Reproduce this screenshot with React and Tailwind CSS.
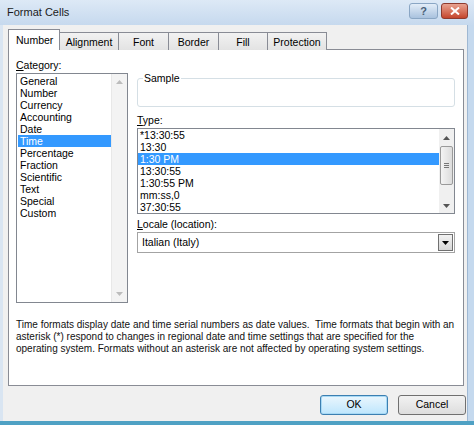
import React from 'react';

const categories = ['General', 'Number', 'Currency', 'Accounting', 'Date', 'Time', 'Percentage', 'Fraction', 'Scientific', 'Text', 'Special', 'Custom'];
const types = ['*13:30:55', '13:30', '1:30 PM', '13:30:55', '1:30:55 PM', 'mm:ss,0', '37:30:55'];
const tabs = [
    { label: 'Alignment', w: 'w-[59px]' },
    { label: 'Font', w: 'w-[50px]' },
    { label: 'Border', w: 'w-[50px]' },
    { label: 'Fill', w: 'w-[49px]' },
    { label: 'Protection', w: 'w-[59px]' },
];

function Arrow({ dir = 'down', color = '#888' }) {
    return (
        <svg width="7" height="4" viewBox="0 0 7 4">
            {dir === 'down'
                ? <path d="M0 0H7L3.5 4Z" fill={color} />
                : <path d="M0 4H7L3.5 0Z" fill={color} />}
        </svg>
    );
}

function ListRow({ text, selected }) {
    return (
        <div className={`h-[12px] leading-[12px] pl-[2px] ${selected ? 'bg-[#3399ff] text-white' : 'text-black'}`}>
            {text}
        </div>
    );
}

export default function App() {
    return (
        <div className="w-[474px] h-[425px] flex flex-col bg-[#f0f0f0] text-[10.5px] text-black overflow-hidden" style={{ fontFamily: '"Liberation Sans", Arial, sans-serif' }}>
            {/* Title bar */}
            <div className="h-[25px] flex items-center bg-gradient-to-b from-[#dde9f6] to-[#c6d9ee] pl-[7px] pr-[6px]">
                <span className="text-[11px] text-[#1b1b1b] flex-1">Format Cells</span>
                <div className="flex gap-[3px] -mt-[3px]">
                    <div className="w-[29px] h-[16px] rounded-[3px] border border-[#8aa6c4] bg-gradient-to-b from-[#e3edf8] to-[#a9c2de] flex items-center justify-center text-[11px] font-bold text-[#4a5f78]">?</div>
                    <div className="w-[27px] h-[16px] rounded-[3px] border border-[#8e3b2f] bg-gradient-to-b from-[#e8a290] to-[#c4442c] flex items-center justify-center">
                        <svg width="10" height="8" viewBox="0 0 10 8">
                            <path d="M1 0.5L9 7.5M9 0.5L1 7.5" stroke="#fff" strokeWidth="2" />
                        </svg>
                    </div>
                </div>
            </div>

            <div className="flex flex-1">
                {/* left frame */}
                <div className="w-[3px] bg-[#d9e5f2]" />

                {/* client area */}
                <div className="flex-1 flex flex-col pt-[4px] pl-[5px] pr-[3px]">
                    {/* Tabs */}
                    <div className="flex items-end h-[21px] relative z-10">
                        <div className="w-[52px] h-[21px] bg-white border border-b-0 border-[#898c95] pl-[7px] pt-[4px] leading-[13px]">Number</div>
                        {tabs.map((t) => (
                            <div key={t.label} className={`${t.w} h-[18px] bg-gradient-to-b from-[#f2f2f2] to-[#e3e3e3] border border-l-0 border-b-0 border-[#898c95] text-center leading-[18px]`}>
                                {t.label}
                            </div>
                        ))}
                    </div>

                    {/* Panel */}
                    <div className="h-[337px] bg-white border border-[#898c95] -mt-[1px] flex flex-col px-[7px]">
                        <div className="flex gap-[9px] mt-[9px]">
                            {/* Category */}
                            <div className="flex flex-col">
                                <div className="h-[13px] leading-[13px] mb-[1px]"><span className="underline">C</span>ategory:</div>
                                <div className="w-[112px] h-[230px] border border-[#828790] flex">
                                    <div className="flex-1 pt-[1px] pl-[1px]">
                                        {categories.map((c) => (
                                            <ListRow key={c} text={c} selected={c === 'Time'} />
                                        ))}
                                    </div>
                                    <div className="w-[16px] bg-[#f3f3f3] border-l border-[#e8e8e8] flex flex-col justify-between items-center py-[6px]">
                                        <Arrow dir="up" color="#bcbcbc" />
                                        <Arrow dir="down" color="#bcbcbc" />
                                    </div>
                                </div>
                            </div>

                            {/* Right column */}
                            <div className="flex-1 flex flex-col pr-[1px]">
                                <div className="mt-[19px] h-[29px] border border-[#d5dfe5] rounded-[3px] relative">
                                    <span className="absolute -top-[7px] left-[5px] bg-white px-[1px] leading-[12px]">Sample</span>
                                </div>
                                <div className="mt-[7px] h-[13px] leading-[13px]"><span className="underline">T</span>ype:</div>
                                <div className="mt-[1px] h-[86px] border border-[#828790] flex">
                                    <div className="flex-1">
                                        {types.map((t, i) => (
                                            <ListRow key={i} text={t} selected={i === 2} />
                                        ))}
                                    </div>
                                    <div className="w-[15px] bg-[#f0f0f0] flex flex-col items-center">
                                        <div className="h-[17px] flex items-center justify-center"><Arrow dir="up" color="#555" /></div>
                                        <div className="w-[13px] h-[39px] rounded-[2px] border border-[#9a9a9a] bg-gradient-to-r from-[#f4f4f4] to-[#dcdcdc] flex flex-col items-center justify-center gap-[1px]">
                                            <div className="w-[5px] h-px bg-[#777]" />
                                            <div className="w-[5px] h-px bg-[#777]" />
                                            <div className="w-[5px] h-px bg-[#777]" />
                                        </div>
                                        <div className="flex-1" />
                                        <div className="h-[15px] flex items-center justify-center"><Arrow dir="down" color="#555" /></div>
                                    </div>
                                </div>
                                <div className="mt-[4px] h-[13px] leading-[13px]"><span className="underline">L</span>ocale (location):</div>
                                <div className="mt-[1px] h-[21px] border border-[#a3a3a3] flex items-center pl-[4px]">
                                    <span className="flex-1">Italian (Italy)</span>
                                    <div className="w-[15px] h-[17px] mr-[1px] border border-[#707070] bg-gradient-to-b from-[#f2f2f2] to-[#d6d6d6] flex items-center justify-center">
                                        <Arrow dir="down" color="#000" />
                                    </div>
                                </div>
                            </div>
                        </div>

                        <p className="mt-[16px] leading-[12px] text-[10px] text-[#111]">
                            Time formats display date and time serial numbers as date values.&nbsp; Time formats that begin with an asterisk (*) respond to changes in regional date and time settings that are specified for the operating system. Formats without an asterisk are not affected by operating system settings.
                        </p>
                    </div>

                    {/* Buttons */}
                    <div className="flex justify-end gap-[10px] mt-[9px] -mr-[2px]">
                        <button className="w-[68px] h-[20px] rounded-[3px] border border-[#3c7fb1] bg-gradient-to-b from-[#eaf6fd] to-[#bee6fd] shadow-[inset_0_0_0_1px_#a7d9f5]">OK</button>
                        <button className="w-[68px] h-[20px] rounded-[3px] border border-[#707070] bg-gradient-to-b from-[#f2f2f2] to-[#dddddd]">Cancel</button>
                    </div>
                </div>

                {/* right frame */}
                <div className="w-[7px] bg-[#c5d9ee] border-l border-[#9fb8d3]" />
            </div>

            {/* bottom frame */}
            <div className="h-[4px] bg-[#4fa1c4]" />
        </div>
    );
}
